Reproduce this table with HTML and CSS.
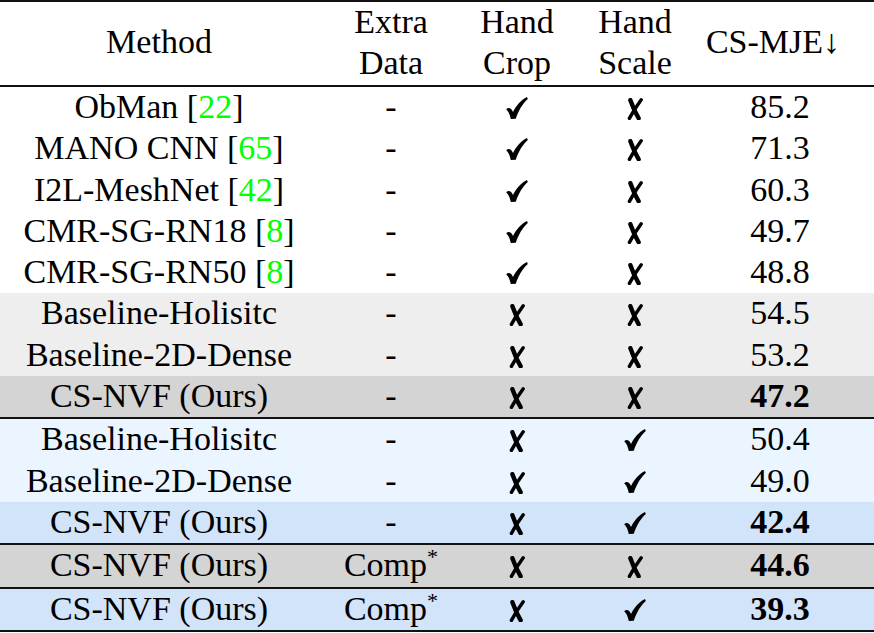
FILE: index.html
```html
<!DOCTYPE html>
<html lang="en">
<head>
<meta charset="utf-8">
<title>CS-MJE results</title>
<link rel="stylesheet" href="styles.css">
</head>
<body>
<svg class="defs" width="0" height="0" aria-hidden="true">
  <defs>
    <symbol id="ck" viewBox="0 0 22 22">
      <path d="M0.2 12.2 C3 9.8 5.4 11.6 7 15 C10.4 8.4 14.6 3.4 21 0 L21.8 2 C16.8 6.6 12.6 13 9.8 21.8 L4.8 22 C4 18 2.8 14.8 0.2 12.2 Z"/>
    </symbol>
    <symbol id="xx" viewBox="0 0 18 22">
      <path d="M4.4 2.2 C6.4 8 9.2 14.4 12.6 20.2" fill="none" stroke-width="4.4" stroke-linecap="round"/>
      <path d="M15.2 1.8 C11 7.6 7 13.6 3.4 20.4" fill="none" stroke-width="3.4" stroke-linecap="round"/>
    </symbol>
  </defs>
</svg>
<table class="results">
  <colgroup>
    <col class="c-method"><col class="c-extra"><col class="c-crop"><col class="c-scale"><col class="c-mje">
  </colgroup>
  <thead>
    <tr>
      <th>Method</th>
      <th>Extra<br>Data</th>
      <th>Hand<br>Crop</th>
      <th>Hand<br>Scale</th>
      <th class="mje">CS-MJE↓</th>
    </tr>
  </thead>
  <tbody>
    <tr><td>ObMan [<span class="cite">22</span>]</td><td>-</td><td><svg class="ck"><use href="#ck"/></svg></td><td><svg class="xx"><use href="#xx"/></svg></td><td class="mje">85.2</td></tr>
    <tr><td>MANO CNN [<span class="cite">65</span>]</td><td>-</td><td><svg class="ck"><use href="#ck"/></svg></td><td><svg class="xx"><use href="#xx"/></svg></td><td class="mje">71.3</td></tr>
    <tr><td>I2L-MeshNet [<span class="cite">42</span>]</td><td>-</td><td><svg class="ck"><use href="#ck"/></svg></td><td><svg class="xx"><use href="#xx"/></svg></td><td class="mje">60.3</td></tr>
    <tr><td>CMR-SG-RN18 [<span class="cite">8</span>]</td><td>-</td><td><svg class="ck"><use href="#ck"/></svg></td><td><svg class="xx"><use href="#xx"/></svg></td><td class="mje">49.7</td></tr>
    <tr><td>CMR-SG-RN50 [<span class="cite">8</span>]</td><td>-</td><td><svg class="ck"><use href="#ck"/></svg></td><td><svg class="xx"><use href="#xx"/></svg></td><td class="mje">48.8</td></tr>
    <tr class="grey"><td>Baseline-Holisitc</td><td>-</td><td><svg class="xx"><use href="#xx"/></svg></td><td><svg class="xx"><use href="#xx"/></svg></td><td class="mje">54.5</td></tr>
    <tr class="grey"><td>Baseline-2D-Dense</td><td>-</td><td><svg class="xx"><use href="#xx"/></svg></td><td><svg class="xx"><use href="#xx"/></svg></td><td class="mje">53.2</td></tr>
    <tr class="grey-dark"><td>CS-NVF (Ours)</td><td>-</td><td><svg class="xx"><use href="#xx"/></svg></td><td><svg class="xx"><use href="#xx"/></svg></td><td class="mje best">47.2</td></tr>
  </tbody>
  <tbody class="ruled">
    <tr class="blue"><td>Baseline-Holisitc</td><td>-</td><td><svg class="xx"><use href="#xx"/></svg></td><td><svg class="ck"><use href="#ck"/></svg></td><td class="mje">50.4</td></tr>
    <tr class="blue"><td>Baseline-2D-Dense</td><td>-</td><td><svg class="xx"><use href="#xx"/></svg></td><td><svg class="ck"><use href="#ck"/></svg></td><td class="mje">49.0</td></tr>
    <tr class="blue-dark"><td>CS-NVF (Ours)</td><td>-</td><td><svg class="xx"><use href="#xx"/></svg></td><td><svg class="ck"><use href="#ck"/></svg></td><td class="mje best">42.4</td></tr>
  </tbody>
  <tbody class="ruled">
    <tr class="grey-dark"><td>CS-NVF (Ours)</td><td>Comp<sup>*</sup></td><td><svg class="xx"><use href="#xx"/></svg></td><td><svg class="xx"><use href="#xx"/></svg></td><td class="mje best">44.6</td></tr>
  </tbody>
  <tbody class="ruled last">
    <tr class="blue-dark"><td>CS-NVF (Ours)</td><td>Comp<sup>*</sup></td><td><svg class="xx"><use href="#xx"/></svg></td><td><svg class="ck"><use href="#ck"/></svg></td><td class="mje best">39.3</td></tr>
  </tbody>
</table>
</body>
</html>
```

FILE: styles.css
```css
html, body {
  margin: 0;
  padding: 0;
  background: #ffffff;
}

.defs {
  position: absolute;
  width: 0;
  height: 0;
  overflow: hidden;
}

.results {
  width: 874px;
  border-collapse: collapse;
  table-layout: fixed;
  font-family: "Liberation Serif", serif;
  font-size: 34px;
  color: #000;
  border-top: 2px solid #111;
}

.c-method { width: 318px; }
.c-extra { width: 146px; }
.c-crop { width: 106px; }
.c-scale { width: 130px; }
.c-mje { width: 174px; }

.results th,
.results td {
  padding: 0;
  text-align: center;
  font-weight: normal;
  white-space: nowrap;
  font-family: "Liberation Serif", serif;
}

.results th {
  line-height: 40.5px;
  padding-bottom: 2px;
  vertical-align: middle;
}

.results thead tr {
  border-bottom: 2px solid #111;
}

.results td {
  height: 39.3px;
  line-height: 39.3px;
  padding-bottom: 2px;
}

.results .mje {
  padding-right: 14px;
}

.results th.mje {
  padding-right: 28px;
}

.results .cite {
  color: #00ff00;
}

.results td.best {
  font-weight: bold;
}

.results sup {
  font-size: 22px;
  line-height: 0;
  vertical-align: 12px;
}

.grey { background: #eeeeee; }
.grey-dark { background: #d4d4d4; }
.blue { background: #ebf5ff; }
.blue-dark { background: #d2e4fa; }

.ruled {
  border-top: 2px solid #111;
}

.last {
  border-bottom: 2px solid #111;
}

svg.ck {
  width: 22px;
  height: 22px;
  fill: #000;
  vertical-align: -1px;
}

svg.xx {
  width: 18px;
  height: 22px;
  stroke: #000;
  fill: none;
  vertical-align: -2px;
}
```
